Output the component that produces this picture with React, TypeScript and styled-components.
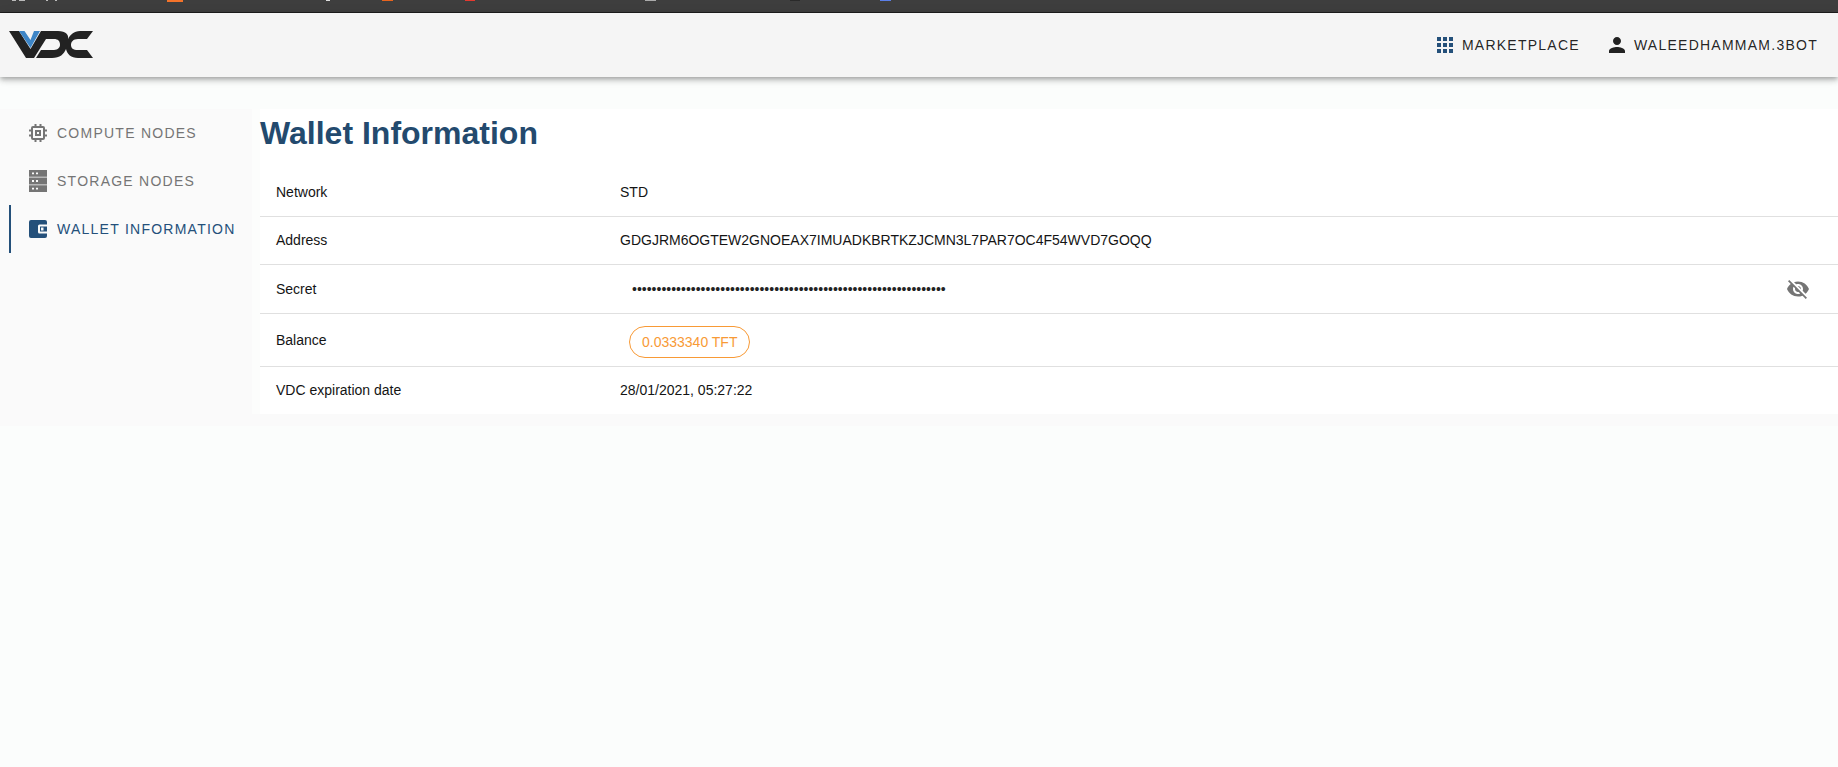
import styled, { createGlobalStyle } from "styled-components";

const GlobalStyle = createGlobalStyle`
  html, body {
    margin: 0;
    padding: 0;
    background: #fbfdfc;
    font-family: "Liberation Sans", Arial, sans-serif;
  }
`;

const rows = [
  { label: "Network", value: "STD" },
  { label: "Address", value: "GDGJRM6OGTEW2GNOEAX7IMUADKBRTKZJCMN3L7PAR7OC4F54WVD7GOQQ" },
];

const Logo = () => (
  <svg width="84" height="28" viewBox="9 31 84 28">
    <path
      fill="#222"
      d="M9 31H19L30.5 49L41 31H58C66 31 69 35 68 39C70 35 74 31 80 31H93L87 39H78C73 39 71 42 71 45C71 48 73 50 78 50H87L93 58H78C71 58 67 54 66 49C64 54 60 58 52 58H36L41 50H54C58 50 60 47 60 45C60 41 58 39 54 39H46L34 58H26Z"
    />
    <path fill="#3d85c6" d="M19 31H24.5L30.5 40L34 31H40L30.5 48Z" />
  </svg>
);

const App = () => {
  return (
    <Page>
      <GlobalStyle />
      <WindowBar>
        <Sliver at={12} w={4} bg="#bbb" />
        <Sliver at={3} w={6} bg="#bbb" />
        <Sliver at={21} w={2} bg="#bbb" />
        <Sliver at={7} w={2} bg="#bbb" />
        <Sliver at={110} w={16} bg="#f4732a" h={2} />
        <Sliver at={143} w={4} bg="#ddd" />
        <Sliver at={52} w={11} bg="#e8641e" />
        <Sliver at={72} w={10} bg="#e5392f" />
        <Sliver at={170} w={11} bg="#aaa" />
        <Sliver at={134} w={10} bg="#2a2a2a" />
        <Sliver at={80} w={11} bg="#5b7fe8" />
      </WindowBar>
      <Header>
        <Logo />
        <HeaderMenu>
          <HeaderButton>
            <svg width="24" height="24" viewBox="0 0 24 24" fill="#24507a">
              <path d="M4 8h4V4H4v4zm6 12h4v-4h-4v4zm-6 0h4v-4H4v4zm0-6h4v-4H4v4zm6 0h4v-4h-4v4zm6-10v4h4V4h-4zm-6 4h4V4h-4v4zm6 6h4v-4h-4v4zm0 6h4v-4h-4v4z" />
            </svg>
            Marketplace
          </HeaderButton>
          <HeaderButton>
            <svg width="24" height="24" viewBox="0 0 24 24" fill="#222">
              <path d="M12 12c2.21 0 4-1.79 4-4s-1.79-4-4-4-4 1.79-4 4 1.79 4 4 4zm0 2c-2.67 0-8 1.34-8 4v2h16v-2c0-2.66-5.33-4-8-4z" />
            </svg>
            waleedhammam.3bot
          </HeaderButton>
        </HeaderMenu>
      </Header>
      <Content>
        <Sidebar>
          <NavItem>
            <svg width="24" height="24" viewBox="0 0 24 24" fill="currentColor">
              <path d="M7 5h1.5V3h2v2h3V3h2v2H17a2 2 0 0 1 2 2v1.5h2v2h-2v3h2v2h-2V17a2 2 0 0 1-2 2h-1.5v2h-2v-2h-3v2h-2v-2H7a2 2 0 0 1-2-2v-1.500H3v-2h2v-3H3v-2h2V7a2 2 0 0 1 2-2zm0 2v10h10V7H7zm2 2h6v6H9V9zm2 2v2h2v-2h-2z" fillRule="evenodd" />
            </svg>
            Compute Nodes
          </NavItem>
          <NavItem>
            <svg width="24" height="24" viewBox="0 0 24 24" fill="currentColor">
              <path d="M3 1h18v6.800H3V1zm3 2.500v1.800h2V3.500H6zm4 0v1.800h2V3.500h-2zM3 8.600h18v6.800H3V8.600zm3 2.500v1.800h2v-1.800H6zm4 0v1.800h2v-1.800h-2zM3 16.200h18V23H3v-6.800zm3 2.500v1.800h2v-1.800H6zm4 0v1.800h2v-1.800h-2z" fillRule="evenodd" />
            </svg>
            Storage Nodes
          </NavItem>
          <NavItem active>
            <svg width="24" height="24" viewBox="0 0 24 24" fill="currentColor">
              <path d="M5 3h14a2 2 0 0 1 2 2v2.500h-7.500a1.500 1.500 0 0 0-1.500 1.500v6a1.500 1.500 0 0 0 1.500 1.500H21V19a2 2 0 0 1-2 2H5a2 2 0 0 1-2-2V5a2 2 0 0 1 2-2zm9 6.500h7v5h-7v-5zm1 1v3h2.500v-3H15z" fillRule="evenodd" />
            </svg>
            Wallet Information
          </NavItem>
        </Sidebar>
        <Panel>
          <Title>Wallet Information</Title>
          <Table>
            <tbody>
              {rows.map((r) => (
                <tr key={r.label}>
                  <LabelCell>{r.label}</LabelCell>
                  <td>{r.value}</td>
                </tr>
              ))}
              <SecretLine>
                <LabelCell>Secret</LabelCell>
                <td>
                  <SecretRow>
                    <Dots>{"•".repeat(64)}</Dots>
                    <svg width="24" height="24" viewBox="0 0 24 24" fill="#757575">
                      <path d="M12 7c2.76 0 5 2.24 5 5 0 .65-.13 1.26-.36 1.83l2.92 2.92c1.51-1.26 2.7-2.89 3.43-4.75-1.73-4.39-6-7.5-11-7.5-1.4 0-2.74.25-3.98.7l2.16 2.16C10.74 7.13 11.35 7 12 7zM2 4.27l2.28 2.28.46.46C3.08 8.3 1.78 10.02 1 12c1.73 4.39 6 7.5 11 7.5 1.55 0 3.03-.3 4.38-.84l.42.42L19.73 22 21 20.73 3.27 3 2 4.27zM7.53 9.8l1.55 1.55c-.05.21-.08.43-.08.65 0 1.66 1.34 3 3 3 .22 0 .44-.03.65-.08l1.55 1.55c-.67.33-1.41.53-2.2.53-2.76 0-5-2.24-5-5 0-.79.2-1.53.53-2.2zm4.31-.78l3.15 3.15.02-.16c0-1.66-1.34-3-3-3l-.17.01z" />
                    </svg>
                  </SecretRow>
                </td>
              </SecretLine>
              <BalanceRow>
                <LabelCell>Balance</LabelCell>
                <td>
                  <Chip>0.0333340 TFT</Chip>
                </td>
              </BalanceRow>
              <tr>
                <LabelCell>VDC expiration date</LabelCell>
                <td>28/01/2021, 05:27:22</td>
              </tr>
            </tbody>
          </Table>
        </Panel>
      </Content>
    </Page>
  );
};

export default App;

const Page = styled.div`
  min-height: 767px;
  background: #fbfdfc;
  overflow: hidden;
`;

const WindowBar = styled.div`
  height: 12px;
  background: #3e3e3e;
  border-bottom: 1px solid #1f1f1f;
  display: flex;
  align-items: flex-start;
`;

const Sliver = styled.span<{ at: number; w: number; bg: string; h?: number }>`
  margin-left: ${({ at }) => at}px;
  width: ${({ w }) => w}px;
  height: ${({ h }) => h || 1}px;
  background: ${({ bg }) => bg};
`;

const Header = styled.header`
  height: 64px;
  background: #f5f5f5;
  display: flex;
  align-items: center;
  justify-content: space-between;
  padding: 0 20px 0 9px;
  box-shadow: 0 2px 4px -1px rgba(0, 0, 0, 0.2), 0 4px 5px 0 rgba(0, 0, 0, 0.14), 0 1px 10px 0 rgba(0, 0, 0, 0.12);
  position: relative;
`;

const HeaderMenu = styled.div`
  display: flex;
  align-items: center;
  gap: 25px;
`;

const HeaderButton = styled.div`
  display: flex;
  align-items: center;
  gap: 5px;
  font-size: 14px;
  letter-spacing: 1.25px;
  text-transform: uppercase;
  color: rgba(0, 0, 0, 0.87);
`;

const Content = styled.main`
  display: flex;
  margin-top: 32px;
  background: #fafafa;
  padding-bottom: 12px;
`;

const Sidebar = styled.nav`
  width: 252px;
  padding-left: 9px;
  box-sizing: border-box;
  flex-shrink: 0;
`;

const NavItem = styled.div<{ active?: boolean }>`
  height: 48px;
  display: flex;
  align-items: center;
  gap: 7px;
  padding-left: 15px;
  box-sizing: border-box;
  font-size: 14px;
  letter-spacing: 1.25px;
  text-transform: uppercase;
  color: ${({ active }) => (active ? "#24507a" : "#757575")};
  border-left: 2px solid ${({ active }) => (active ? "#24507a" : "transparent")};
`;

const Panel = styled.section`
  flex: 1;
  background: #fff;
  border-left: 8px solid #fcfdfc;
`;

const Title = styled.h1`
  margin: 0;
  height: 59px;
  line-height: 48px;
  font-size: 32px;
  font-weight: 700;
  color: #234a6e;
`;

const Table = styled.table`
  width: 100%;
  border-collapse: collapse;
  font-size: 14px;
  color: #141414;

  td {
    padding: 0 16px;
    height: 48px;
    box-sizing: border-box;
    border-bottom: 1px solid #e0e0e0;
  }
  tr:last-child td {
    border-bottom: none;
  }
`;

const LabelCell = styled.td`
  width: 344px;
`;

const SecretLine = styled.tr`
  td {
    height: 49px;
  }
`;

const SecretRow = styled.div`
  display: flex;
  align-items: center;
  justify-content: space-between;
  padding: 0 12px 0 12px;
`;

const Dots = styled.span`
  color: #222;
`;

const BalanceRow = styled.tr`
  td {
    height: 53px;
    vertical-align: top;
  }
  td:first-child {
    padding-top: 18px;
  }
  td:last-child {
    padding-top: 12px;
  }
`;

const Chip = styled.span`
  display: inline-flex;
  align-items: center;
  height: 32px;
  box-sizing: border-box;
  margin-left: 9px;
  padding: 0 12px;
  border: 1px solid #f89a36;
  border-radius: 16px;
  color: #f89a36;
  font-size: 14px;
`;
